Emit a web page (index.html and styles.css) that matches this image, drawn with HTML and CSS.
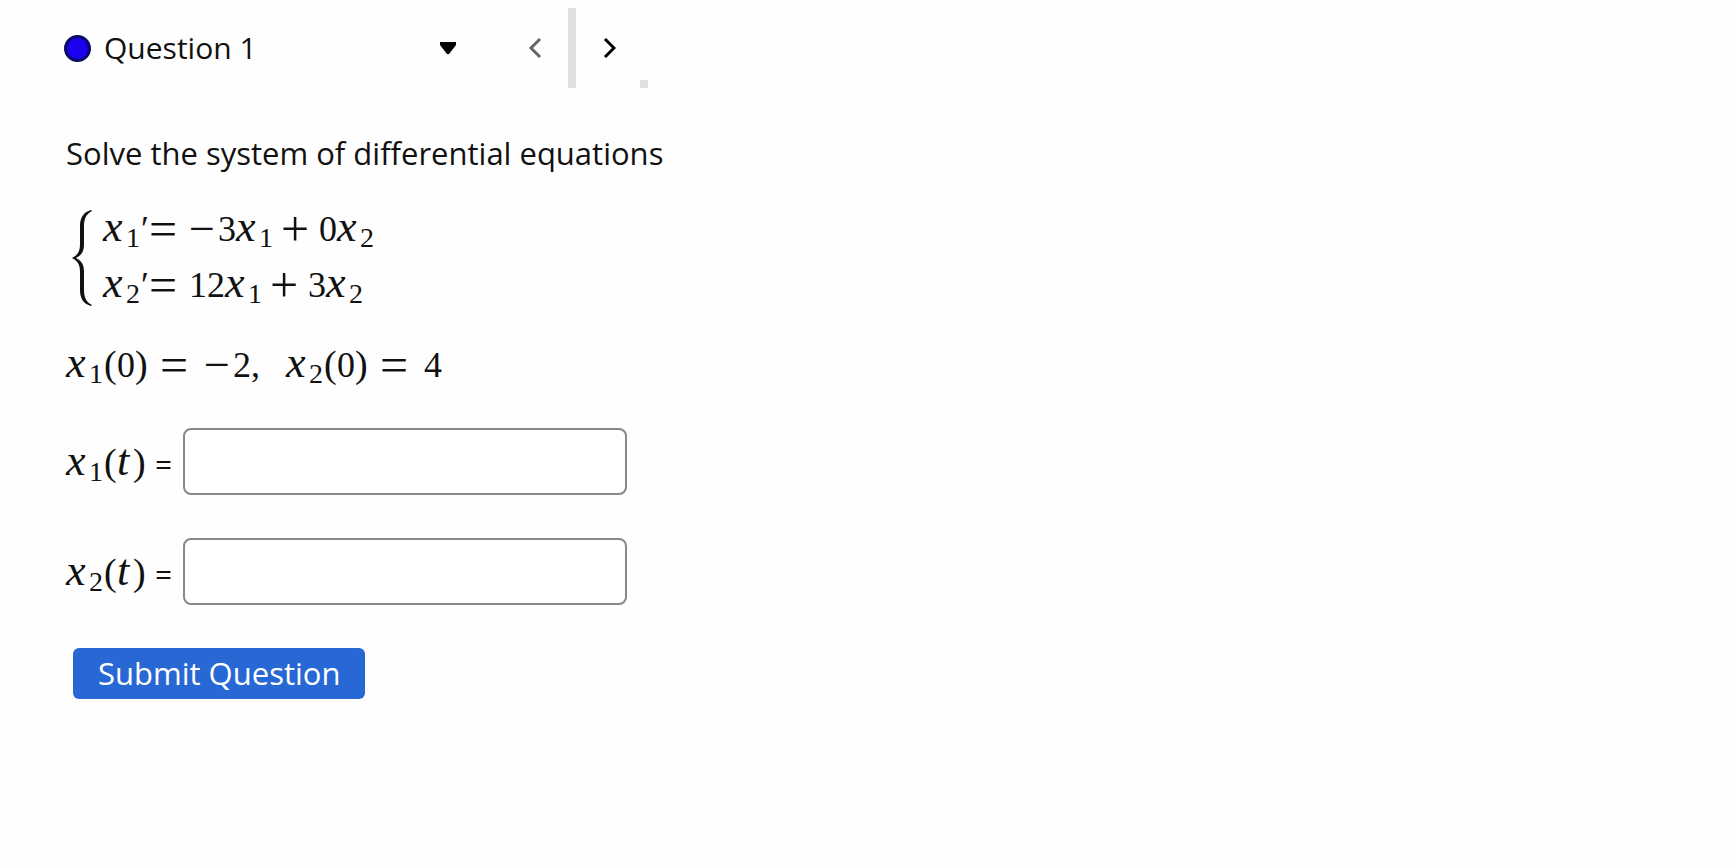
FILE: index.html
```html
<!DOCTYPE html>
<html lang="en">
<head>
<meta charset="utf-8">
<title>Question 1</title>
<link rel="stylesheet" href="styles.css">
</head>
<body>
<header class="bar">
  <span class="dot"></span>
  <div class="picker">
    <select class="picker-select" aria-label="Question"><option>Question 1</option></select>
    <svg class="caret" viewBox="0 0 16 12" aria-hidden="true"><path d="M0 0h16v3L9 12H7L0 3z"/></svg>
  </div>
  <nav class="pager">
    <button class="step step-prev" type="button" aria-label="Previous question"><svg viewBox="0 0 14 22" aria-hidden="true"><path d="M12 2L3 11l9 9"/></svg></button>
    <span class="rule"></span>
    <button class="step step-next" type="button" aria-label="Next question"><svg viewBox="0 0 14 22" aria-hidden="true"><path d="M3 2l9 9-9 9"/></svg></button>
    <span class="tick"></span>
  </nav>
</header>
<main class="question">
  <p class="prompt">Solve the system of differential equations</p>
  <div class="system">
    <svg class="brace" viewBox="0 0 20 98" aria-hidden="true"><path d="M19 1C12 3 8 8 8 17v18C8 42 6 46 0 49c6 3 8 7 8 14v18c0 9 4 14 11 16l1-1c-6-3-8-8-8-15V63c0-7-2-11-8-14 6-3 8-7 8-14V17c0-7 2-12 8-15z"/></svg>
    <div class="rows">
      <div class="math"><i class="var">x</i><span class="sub">1</span><span class="prime">′</span><span class="op">=</span><span class="neg">−</span><span>3</span><i class="var">x</i><span class="sub">1</span><span class="op plus">+</span><span>0</span><i class="var">x</i><span class="sub">2</span></div>
      <div class="math"><i class="var">x</i><span class="sub">2</span><span class="prime">′</span><span class="op">=</span><span>12</span><i class="var">x</i><span class="sub">1</span><span class="op plus">+</span><span>3</span><i class="var">x</i><span class="sub">2</span></div>
    </div>
  </div>
  <div class="math initial"><i class="var">x</i><span class="sub">1</span><span class="par">(</span><span>0</span><span class="par">)</span><span class="op rel">=</span><span class="neg">−</span><span>2</span><span class="comma">,</span><i class="var">x</i><span class="sub">2</span><span class="par">(</span><span>0</span><span class="par">)</span><span class="op rel">=</span><span>4</span></div>
  <form class="answers">
    <div class="answer">
      <label class="math name" for="a1"><i class="var">x</i><span class="sub">1</span><span class="par">(</span><i class="arg">t</i><span class="par">)</span><span class="equals">=</span></label>
      <input class="field" id="a1" type="text">
    </div>
    <div class="answer">
      <label class="math name" for="a2"><i class="var">x</i><span class="sub">2</span><span class="par">(</span><i class="arg">t</i><span class="par">)</span><span class="equals">=</span></label>
      <input class="field" id="a2" type="text">
    </div>
    <button class="submit" type="submit">Submit Question</button>
  </form>
</main>
</body>
</html>
```
FILE: styles.css
```css
* { box-sizing: border-box; }
body {
  margin: 0;
  background: #fefefe;
  color: #111;
  font-family: "Open Sans", "Noto Sans", sans-serif;
  font-size: 31px;
  line-height: 40px;
  font-variant-ligatures: none;
}
.bar {
  display: flex;
  align-items: center;
  padding: 8px 64px 0;
  height: 88px;
}
.dot {
  width: 27px;
  height: 27px;
  border-radius: 50%;
  border: 3px solid #0a0a66;
  background: #1c00f0;
}
.picker {
  display: flex;
  align-items: center;
  width: 365px;
  padding-left: 13px;
}
.picker-select {
  flex: 1;
  appearance: none;
  border: 0;
  padding: 0;
  background: none;
  color: inherit;
  font: inherit;
  font-size: 30px;
}
.caret { width: 16px; height: 12px; }
.pager { display: flex; align-self: stretch; align-items: center; }
.step {
  display: flex;
  padding: 0;
  border: 0;
  background: none;
}
.step svg {
  width: 14px;
  height: 22px;
  fill: none;
  stroke: #000;
  stroke-width: 3;
}
.step-prev { margin: 0 26px 0 72px; }
.step-prev svg { stroke: #666; }
.step-next { margin: 0 24px 0 26px; }
.rule { align-self: stretch; width: 8px; background: #e0e0e0; }
.tick { align-self: flex-end; width: 8px; height: 8px; background: #e0e0e0; }

.question { padding: 45px 66px 40px; }
.prompt { margin: 0; }
.system { display: flex; align-items: flex-start; gap: 11px; padding: 36px 6px 0; }
.brace {
  width: 20px;
  height: 98px;
  fill: #111;
}
.rows { display: grid; gap: 16px; }
.math {
  display: flex;
  align-items: baseline;
  font-family: "Liberation Serif", serif;
  font-size: 36px;
  line-height: 40px;
}
.var, .sub, .prime, .op, .neg, .arg, .equals { line-height: 0; }
.var { width: 23px; font-size: 44px; }
.sub { width: 15px; font-size: 28px; position: relative; top: 6px; }
.prime { width: 8px; }
.op, .neg { align-self: center; }
.op { width: 40px; font-size: 50px; }
.plus { margin-left: 7px; width: 38px; }
.neg { width: 29px; font-size: 46px; }
.par { width: 13px; font-size: 38px; }
.rel { margin-left: 12px; width: 44px; }
.comma { width: 35px; }
.arg { width: 16px; font-size: 44px; }
.equals { font-family: "Open Sans", sans-serif; font-size: 30px; margin-left: 9px; }
.initial { padding-top: 37px; }
.initial > .op, .initial > .neg { align-self: center; }
.answers { padding-top: 43px; }
.answer { display: flex; align-items: center; margin-bottom: 43px; }
.name { width: 117px; }
.field {
  width: 444px;
  height: 67px;
  padding: 8px 12px;
  border: 2px solid #888;
  border-radius: 8px;
  background: #fff;
  font: inherit;
}
.submit {
  display: block;
  margin-left: 7px;
  padding: 5px 25px 6px;
  border: 0;
  border-radius: 6px;
  background: #2868d4;
  color: #fff;
  font: inherit;
}
```
